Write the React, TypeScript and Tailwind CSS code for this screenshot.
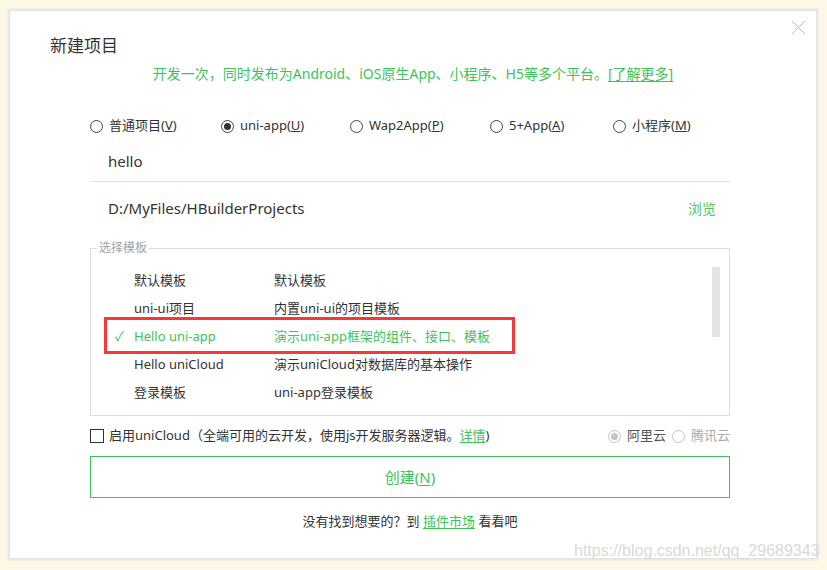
import React from 'react'

const font = { fontFamily: '"Noto Sans", "Noto Sans CJK SC", sans-serif' }

const kinds = [
  { label: '普通项目', key: 'V', checked: false, w: 'w-[131px]' },
  { label: 'uni-app', key: 'U', checked: true, w: 'w-[129px]' },
  { label: 'Wap2App', key: 'P', checked: false, w: 'w-[140px]' },
  { label: '5+App', key: 'A', checked: false, w: 'w-[123px]' },
  { label: '小程序', key: 'M', checked: false, w: 'w-auto' },
]

const templates = [
  { name: '默认模板', desc: '默认模板' },
  { name: 'uni-ui项目', desc: '内置uni-ui的项目模板' },
  { name: 'Hello uni-app', desc: '演示uni-app框架的组件、接口、模板', active: true },
  { name: 'Hello uniCloud', desc: '演示uniCloud对数据库的基本操作' },
  { name: '登录模板', desc: 'uni-app登录模板' },
]

function Radio({ checked, light }: { checked?: boolean; light?: boolean }) {
  return (
    <span
      className={`flex h-[13px] w-[13px] flex-none items-center justify-center rounded-full border ${
        light ? 'border-[#c4c4c4]' : 'border-[#444]'
      }`}
    >
      {checked && <span className={`h-[7px] w-[7px] rounded-full ${light ? 'bg-[#c4c4c4]' : 'bg-[#333]'}`} />}
    </span>
  )
}

export default function App() {
  return (
    <div className="relative h-[570px] w-[827px] overflow-hidden bg-[#fdf7e6] pl-[10px] pt-[11px]" style={font}>
      <div className="relative flex h-[547px] w-[806px] flex-col bg-white pt-[23px] shadow-[0_0_2px_2px_#e2e2e2]">
        {/* close */}
        <svg className="absolute right-[10px] top-[9px]" width="15" height="15" viewBox="0 0 15 15">
          <path d="M1 1L14 14M14 1L1 14" stroke="#bdbdbd" strokeWidth="1" />
        </svg>

        <div className="pl-[40px] text-[17px] leading-[24px] text-[#333]">新建项目</div>
        <div className="mt-[6px] text-center text-[14px] leading-[20px] text-[#3ec25a]">
          开发一次，同时发布为Android、iOS原生App、小程序、H5等多个平台。
          <span className="underline underline-offset-2">[了解更多]</span>
        </div>

        <div className="ml-[80px] flex w-[640px] flex-col">
          {/* project kinds */}
          <div className="mt-[32px] flex h-[20px] items-center text-[13px] text-[#333]">
            {kinds.map(k => (
              <div key={k.label} className={`flex items-center gap-[6px] ${k.w}`}>
                <Radio checked={k.checked} />
                <span>
                  {k.label}(<span className="underline">{k.key}</span>)
                </span>
              </div>
            ))}
          </div>

          <div className="mt-[6px] flex h-[40px] items-center border-b border-[#e3e3e3] pl-[18px] text-[15px] text-[#333]">
            hello
          </div>
          <div className="flex h-[52px] items-center justify-between pl-[18px] pr-[14px] text-[15px] text-[#333]">
            <span>D:/MyFiles/HBuilderProjects</span>
            <span className="text-[14px] text-[#4cca66]">浏览</span>
          </div>

          {/* templates */}
          <fieldset className="mt-[6px] h-[176px] border border-[#dcdcdc] px-0 pb-0">
            <legend className="ml-[6px] px-[2px] text-[12px] leading-[16px] text-[#a3a3a3]">选择模板</legend>
            <div className="flex pt-[11px]">
              <div className="flex flex-1 flex-col">
                {templates.map(t => (
                  <div
                    key={t.name}
                    className={`relative flex h-[28px] items-center text-[13px] ${
                      t.active ? 'text-[#3ec25a]' : 'text-[#333]'
                    }`}
                  >
                    <span className="w-[43px] pl-[24px] text-[13px]">{t.active ? '✓' : ''}</span>
                    <span className="w-[140px]">{t.name}</span>
                    <span>{t.desc}</span>
                    {t.active && (
                      <span className="absolute left-[13px] top-[-6px] h-[37px] w-[411px] border-[3px] border-[#f23a3c]" />
                    )}
                  </div>
                ))}
              </div>
              <div className="mr-[9px] h-[70px] w-[8px] bg-[#e4e4e4]" />
            </div>
          </fieldset>

          {/* uniCloud */}
          <div className="mt-[10px] flex h-[20px] items-center text-[13px] text-[#333]">
            <span className="h-[14px] w-[14px] border border-[#333]" />
            <span className="ml-[5px]">
              启用uniCloud（全端可用的云开发，使用js开发服务器逻辑。
              <span className="text-[#3ec25a] underline underline-offset-2">详情</span>)
            </span>
            <span className="ml-auto flex items-center gap-[6px]">
              <Radio checked light />
              <span className="text-[#555]">阿里云</span>
              <Radio light />
              <span className="text-[#aaa]">腾讯云</span>
            </span>
          </div>

          <button className="mt-[10px] flex h-[42px] items-center justify-center border border-[#3ec25a] text-[15px] text-[#3ec25a]">
            创建(<span className="underline underline-offset-2">N</span>)
          </button>

          <div className="mt-[13px] text-center text-[13px] leading-[20px] text-[#333]">
            没有找到想要的？到 <span className="text-[#3ec25a] underline underline-offset-2">插件市场</span> 看看吧
          </div>
        </div>
      </div>

      {/* watermark */}
      <div
        className="absolute left-[574px] top-[541px] text-[16px] leading-[20px] text-[#d9d9d9]"
        style={{ fontFamily: '"Liberation Sans", Arial, sans-serif' }}
      >
        https://blog.csdn.net/qq_29689343
      </div>
    </div>
  )
}
